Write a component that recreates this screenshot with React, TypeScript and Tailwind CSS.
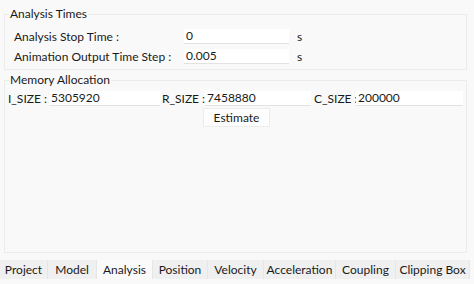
import React from "react";

const font = { fontFamily: 'Lato, "Noto Sans", sans-serif' };

function Field({ value, className }: { value: string; className: string }) {
  return (
    <div className={`h-[15px] bg-white border-b border-[#e2e2e2] flex items-center pl-[2px] ${className}`}>
      {value}
    </div>
  );
}

const tabs = [
  { label: "Project", w: "w-[48px]" },
  { label: "Model", w: "w-[49px]" },
  { label: "Analysis", w: "w-[56px]" },
  { label: "Position", w: "w-[55px]" },
  { label: "Velocity", w: "w-[56px]" },
  { label: "Acceleration", w: "w-[72px]" },
  { label: "Coupling", w: "w-[60px]" },
  { label: "Clipping Box", w: "w-[74px]" },
];

export default function App() {
  return (
    <div className="w-[474px] h-[284px] bg-[#f9f9f9] text-[12px] text-[#1a1a1a] flex flex-col" style={font}>
      <div className="flex-1 flex flex-col px-[4px] pt-[8px]">
        {/* Analysis Times */}
        <div className="relative mr-[3px] mt-[6px] h-[56px] border border-[#ececec]">
          <span className="absolute -top-[9px] left-[4px] px-[1px] leading-[16px] bg-[#f9f9f9]">Analysis Times</span>
          <div className="flex flex-col gap-[5px] pt-[14px]">
            <div className="flex items-center h-[15px]">
              <span className="w-[179px] pl-[9px]">Analysis Stop Time :</span>
              <Field value="0" className="w-[105px]" />
              <span className="ml-[8px]">s</span>
            </div>
            <div className="flex items-center h-[15px]">
              <span className="w-[179px] pl-[9px]">Animation Output Time Step :</span>
              <Field value="0.005" className="w-[105px]" />
              <span className="ml-[8px]">s</span>
            </div>
          </div>
        </div>

        {/* Memory Allocation */}
        <div className="relative mr-[3px] mt-[10px] h-[173px] border border-[#ececec]">
          <span className="absolute -top-[9px] left-[4px] px-[1px] leading-[16px] bg-[#f9f9f9]">Memory Allocation</span>
          <div className="flex items-center h-[15px] mt-[10px] pr-[3px]">
            <span className="pl-[3px] w-[44px] whitespace-nowrap">I_SIZE :</span>
            <Field value="5305920" className="w-[111px]" />
            <span className="pl-[2px] w-[45px] whitespace-nowrap">R_SIZE :</span>
            <Field value="7458880" className="w-[106px]" />
            <span className="pl-[3px] w-[45px] whitespace-nowrap">C_SIZE :</span>
            <Field value="200000" className="flex-1" />
          </div>
          <div className="flex mt-[2px] pl-[198px]">
            <div className="w-[67px] h-[19px] bg-[#fdfdfd] border border-[#ececec] flex items-center justify-center">
              Estimate
            </div>
          </div>
        </div>
      </div>

      {/* Tab bar */}
      <div className="h-[22px] flex items-start pt-[0px] mb-[2px]">
        {tabs.map((t) => (
          <div
            key={t.label}
            className={`${t.w} h-[19px] flex items-center justify-center border-r border-[#e6e6e6] ${
              t.label === "Analysis" ? "bg-[#fafafa]" : "bg-[#f0f0f0]"
            }`}
          >
            {t.label}
          </div>
        ))}
      </div>
    </div>
  );
}
